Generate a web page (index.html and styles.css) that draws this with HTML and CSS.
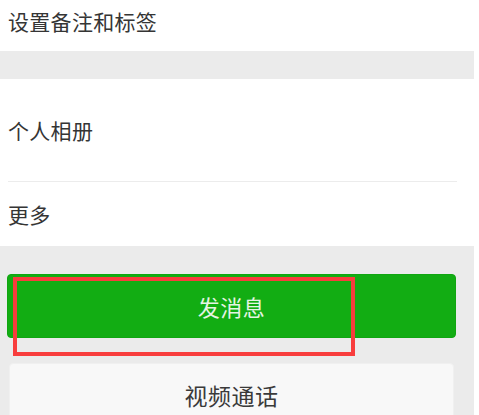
FILE: index.html
```html
<!DOCTYPE html>
<html lang="zh">
<head>
<meta charset="utf-8">
<link rel="stylesheet" href="styles.css">
</head>
<body>
<div class="page">
  <div class="row row-top">设置备注和标签</div>
  <div class="spacer"></div>
  <div class="group">
    <div class="row row-album">个人相册</div>
    <div class="divider"></div>
    <div class="row row-more">更多</div>
  </div>
  <div class="actions">
    <button class="btn btn-primary">发消息</button>
    <button class="btn btn-default">视频通话</button>
    <div class="highlight"></div>
  </div>
</div>
</body>
</html>
```

FILE: styles.css
```css
html, body {
  margin: 0;
  padding: 0;
  background: #ffffff;
}
body {
  font-family: "Noto Sans CJK SC", "Noto Sans", sans-serif;
  color: #353535;
  overflow: hidden;
  height: 415px;
}
.page {
  width: 474px;
  min-height: 415px;
  display: flex;
  flex-direction: column;
  background: #ffffff;
}
.page > * {
  flex-shrink: 0;
}
.row {
  font-size: 21px;
  letter-spacing: 0.3px;
  padding-left: 8px;
  display: flex;
  align-items: center;
  box-sizing: border-box;
}
.row-top {
  height: 51px;
  align-items: flex-start;
  padding-top: 6px;
  line-height: 30px;
}
.spacer {
  height: 28px;
  background: #ebebeb;
}
.group {
  display: flex;
  flex-direction: column;
  background: #ffffff;
}
.group > * {
  flex-shrink: 0;
}
.row-album {
  height: 102px;
}
.divider {
  height: 1px;
  margin: 0 17px 0 8px;
  background: #ececec;
}
.row-more {
  height: 64px;
}
.actions {
  position: relative;
  flex: 1 0 auto;
  background: #ebebeb;
  padding: 28px 0 0 0;
  display: flex;
  flex-direction: column;
  gap: 25px;
}
.btn {
  font-family: "Noto Sans CJK SC", "Noto Sans", sans-serif;
  height: 64px;
  border-radius: 4px;
  font-size: 22px;
  letter-spacing: 0.5px;
  cursor: pointer;
  flex: none;
}
.btn-primary {
  margin: 0 18px 0 7px;
  background: #12ad13;
  color: #e6f4e4;
  border: 1px solid #10a611;
}
.btn-default {
  margin: 0 20px 0 9px;
  background: #f8f8f8;
  color: #3a3a3a;
  border: 1px solid #f0f0f0;
  font-size: 23px;
}
.highlight {
  position: absolute;
  left: 13px;
  top: 31px;
  width: 342px;
  height: 79px;
  box-sizing: border-box;
  border: 4px solid #f83d3d;
}
```
